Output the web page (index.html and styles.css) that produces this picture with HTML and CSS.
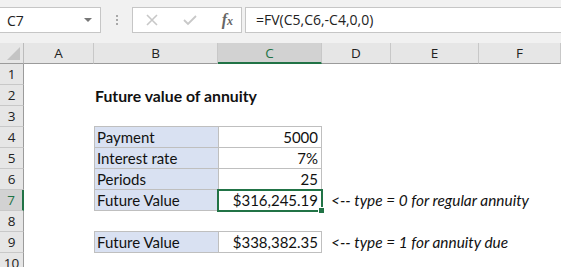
FILE: index.html
```html
<!DOCTYPE html>
<html lang="en">

<head>
    <meta charset="UTF-8">
    <title>Future value of annuity</title>
    <link rel="stylesheet" href="styles.css">
</head>

<body>
    <!-- Name box and formula bar -->
    <div class="toolbar">
        <div class="namebox">
            <span>C7</span>
            <span class="caret"></span>
        </div>
        <div class="grip">
            <i></i><i></i><i></i>
        </div>
        <div class="fxbuttons">
            <svg width="14" height="14" viewBox="0 0 14 14">
                <path d="M2 2 L12 12 M12 2 L2 12" stroke="#c8c8c8" stroke-width="1.6" fill="none" />
            </svg>
            <svg width="16" height="14" viewBox="0 0 16 14">
                <path d="M2 7 L6 11 L14 3" stroke="#c8c8c8" stroke-width="1.8" fill="none" />
            </svg>
            <span class="fx">f<sub>x</sub></span>
        </div>
        <div class="formula">=FV(C5,C6,-C4,0,0)</div>
    </div>

    <!-- Sheet grid -->
    <div class="sheet">
        <div class="corner"><span></span></div>
        <div class="colhead">A</div>
        <div class="colhead">B</div>
        <div class="colhead sel">C</div>
        <div class="colhead">D</div>
        <div class="colhead">E</div>
        <div class="colhead">F</div>

        <div class="rowhead">1</div>
        <div></div><div></div><div></div><div></div><div></div><div></div>

        <div class="rowhead">2</div>
        <div></div>
        <div class="cell title">Future value of annuity</div>
        <div></div><div></div><div></div><div></div>

        <div class="rowhead">3</div>
        <div></div><div></div><div></div><div></div><div></div><div></div>

        <div class="rowhead">4</div>
        <div></div>
        <div class="cell label top">Payment</div>
        <div class="cell num top">5000</div>
        <div></div><div></div><div></div>

        <div class="rowhead">5</div>
        <div></div>
        <div class="cell label">Interest rate</div>
        <div class="cell num">7%</div>
        <div></div><div></div><div></div>

        <div class="rowhead">6</div>
        <div></div>
        <div class="cell label">Periods</div>
        <div class="cell num">25</div>
        <div></div><div></div><div></div>

        <div class="rowhead sel">7</div>
        <div></div>
        <div class="cell label">Future Value</div>
        <div class="cell num active">$316,245.19<span class="handle"></span></div>
        <div class="cell note">&lt;-- type = 0 for regular annuity</div>
        <div></div><div></div>

        <div class="rowhead">8</div>
        <div></div><div></div><div></div><div></div><div></div><div></div>

        <div class="rowhead">9</div>
        <div></div>
        <div class="cell label top">Future Value</div>
        <div class="cell num top">$338,382.35</div>
        <div class="cell note">&lt;-- type = 1 for annuity due</div>
        <div></div><div></div>

        <div class="rowhead">10</div>
        <div></div><div></div><div></div><div></div><div></div><div></div>
    </div>
</body>

</html>
```

FILE: styles.css
```css
body {
    margin: 0;
    width: 561px;
    height: 267px;
    overflow: hidden;
    background: #fff;
    font-family: "Open Sans", sans-serif;
}

/* Formula bar */
.toolbar {
    height: 43px;
    background: #f1f1f1;
    display: flex;
    align-items: flex-start;
    padding-top: 7px;
    box-sizing: border-box;
}

.namebox {
    width: 101px;
    height: 26px;
    box-sizing: border-box;
    background: #fff;
    border: 1px solid #c6c6c6;
    border-left: none;
    display: flex;
    align-items: center;
    justify-content: space-between;
    padding: 0 8px 0 7px;
    font-size: 14px;
    color: #222;
}

.caret {
    width: 0;
    height: 0;
    border-left: 4px solid transparent;
    border-right: 4px solid transparent;
    border-top: 4px solid #777;
}

.grip {
    width: 31px;
    height: 26px;
    display: flex;
    flex-direction: column;
    align-items: center;
    justify-content: center;
    gap: 2px;
}

.grip i {
    width: 2px;
    height: 2px;
    background: #a8a8a8;
}

.fxbuttons {
    width: 110px;
    height: 26px;
    box-sizing: border-box;
    background: #fff;
    border: 1px solid #c6c6c6;
    display: flex;
    align-items: center;
    justify-content: space-between;
    padding: 0 8px 0 12px;
}

.fx {
    font-family: "Liberation Serif", serif;
    font-style: italic;
    font-weight: bold;
    font-size: 16px;
    color: #666;
}

.fx sub {
    font-size: 12px;
    vertical-align: 0;
}

.formula {
    flex: 1;
    height: 26px;
    margin-left: 3px;
    box-sizing: border-box;
    background: #fff;
    border: 1px solid #c6c6c6;
    border-right: none;
    padding-left: 10px;
    font-size: 14px;
    line-height: 24px;
    color: #222;
}

/* Sheet */
.sheet {
    display: grid;
    grid-template-columns: 24px 70px 124px 104px 69px 88px 82px;
    grid-template-rows: 21px;
    grid-auto-rows: 21px;
}

.corner {
    background: #e6e6e6;
    border-right: 1px solid #bcbcbc;
    border-bottom: 1px solid #9b9b9b;
    position: relative;
}

.corner span {
    position: absolute;
    right: 3px;
    bottom: 3px;
    width: 0;
    height: 0;
    border-left: 13px solid transparent;
    border-bottom: 13px solid #c4c4c4;
}

.colhead {
    background: #e6e6e6;
    border-right: 1px solid #c8c8c8;
    border-bottom: 1px solid #9b9b9b;
    font-size: 13.5px;
    line-height: 20px;
    text-align: center;
    color: #222;
}

.colhead.sel {
    background: #d2d2d2;
    border-bottom: 2px solid #217346;
    color: #217346;
}

.rowhead {
    background: #e6e6e6;
    border-right: 1px solid #9b9b9b;
    border-bottom: 1px solid #c8c8c8;
    font-size: 13.5px;
    line-height: 20px;
    text-align: center;
    color: #222;
}

.rowhead.sel {
    background: #d2d2d2;
    border-right: 2px solid #217346;
    color: #217346;
}

.cell {
    font-family: Lato, sans-serif;
    font-size: 15px;
    line-height: 21px;
    white-space: nowrap;
    color: #111;
    box-sizing: border-box;
}

.cell.title {
    font-weight: bold;
    font-size: 15.8px;
    padding-left: 1px;
}

.cell.label {
    background: #d9e1f2;
    border-left: 1px solid #bfbfbf;
    border-bottom: 1px solid #bfbfbf;
    padding-left: 2px;
    line-height: 20px;
}

.cell.num {
    border-left: 1px solid #bfbfbf;
    border-right: 1px solid #bfbfbf;
    border-bottom: 1px solid #bfbfbf;
    text-align: right;
    padding-right: 3px;
    line-height: 20px;
}

.cell.top {
    border-top: 1px solid #bfbfbf;
    margin-top: -1px;
    line-height: 20px;
}

.cell.active {
    border: 2px solid #217346;
    margin: -1px -1px -1px -1px;
    line-height: 19px;
    padding-right: 3px;
    position: relative;
}

.handle {
    position: absolute;
    right: -4px;
    bottom: -4px;
    width: 5px;
    height: 5px;
    background: #217346;
    border: 1px solid #fff;
}

.cell.note {
    font-style: italic;
    font-size: 15.4px;
    padding-left: 9px;
    overflow: visible;
}
```
